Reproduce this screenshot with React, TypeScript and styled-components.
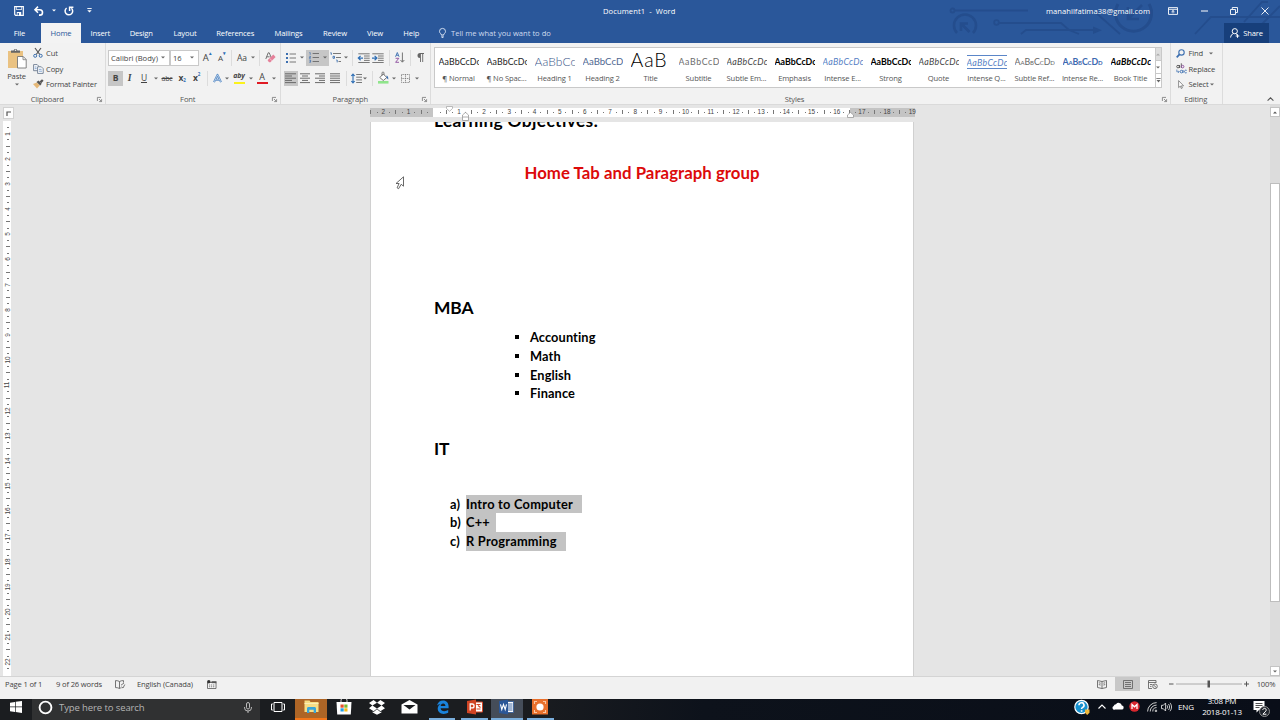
import React from "react";
import styled, { createGlobalStyle, css } from "styled-components";

const Global = createGlobalStyle`
  * { box-sizing: border-box; }
  body { margin: 0; overflow: hidden; background: #e5e5e5; }
  svg { display: block; flex: none; overflow: visible; }
`;

const BLUE = "#2a579a";
const UI = `"Open Sans", "Noto Sans", sans-serif`;

const Window = styled.div`
  width: 1280px;
  height: 720px;
  display: flex;
  flex-direction: column;
  overflow: hidden;
  font-family: ${UI};
  font-size: 7.6px;
  letter-spacing: -0.15px;
  color: #444;
  white-space: nowrap;
  cursor: default;
`;

/* ---------- header ---------- */
const Header = styled.header`
  position: relative;
  height: 43px;
  background: ${BLUE};
  color: #fff;
  flex: none;
`;
const Circuit = styled.svg`
  position: absolute;
  right: 0;
  top: 0;
`;
const TitleRow = styled.div`
  position: relative;
  height: 23px;
  display: flex;
  align-items: center;
  justify-content: space-between;
  padding: 0 11px 2px 14px;
`;
const QuickAccess = styled.div`
  width: 589px;
  display: flex;
  align-items: center;
`;
const Title = styled.div`
  width: 443px;
  letter-spacing: 0.08px;
`;
const Account = styled.div`
  flex: 1;
  letter-spacing: 0.03px;
`;
const WindowButtons = styled.div`
  width: 101px;
  display: flex;
  align-items: center;
  justify-content: space-between;
`;
const TabRow = styled.nav`
  position: relative;
  height: 20px;
  display: flex;
`;
const Tab = styled.div<{ $w: number; $active?: boolean }>`
  width: ${(p) => p.$w}px;
  display: flex;
  align-items: center;
  justify-content: center;
  &:first-child { padding-right: 2px; }
  ${(p) => p.$active && css`background: #f3f3f3; color: ${BLUE};`}
`;
const TellMe = styled.div`
  flex: 1;
  display: flex;
  align-items: center;
  gap: 5px;
  padding-left: 10px;
  color: #cfdcf0;
  letter-spacing: 0;
`;
const Share = styled.div`
  width: 45px;
  margin-right: 11px;
  display: flex;
  align-items: center;
  justify-content: center;
  gap: 3px;
  background: #173f7b;
`;

/* ---------- ribbon ---------- */
const Ribbon = styled.section`
  height: 62px;
  flex: none;
  display: flex;
  background: #f2f2f2;
  border-bottom: 1px solid #dadada;
`;
const Group = styled.div<{ $w: number }>`
  width: ${(p) => p.$w}px;
  display: flex;
  flex-direction: column;
  border-right: 1px solid #dcdcdc;
`;
const GroupBody = styled.div`
  height: 50px;
  display: flex;
`;
const GroupFooter = styled.div<{ $shift?: number }>`
  position: relative;
  height: 11px;
  display: flex;
  align-items: center;
  justify-content: center;
  padding-right: ${(p) => p.$shift ?? 10}px;
  color: #555;
`;
const Launcher = styled.svg`
  position: absolute;
  right: 3px;
  top: 4px;
`;
const PasteButton = styled.div`
  width: 33px;
  padding-top: 5px;
  display: flex;
  flex-direction: column;
  align-items: center;
  gap: 2px;
`;
const Commands = styled.div<{ $pad?: number }>`
  display: flex;
  flex-direction: column;
  padding: 2.4px 0 0 ${(p) => p.$pad ?? 0}px;
`;
const Command = styled.div`
  height: 15.5px;
  display: flex;
  align-items: center;
`;
const CommandIcon = styled.span`
  width: 13px;
  display: flex;
  justify-content: flex-start;
`;
const Rows = styled.div<{ $x: number }>`
  display: flex;
  flex-direction: column;
  gap: 5px;
  padding: 7px 0 0 ${(p) => p.$x}px;
`;
const Row = styled.div`
  height: 15.5px;
  display: flex;
  align-items: stretch;
`;
const Slot = styled.div<{ $w: number; $on?: boolean }>`
  width: ${(p) => p.$w}px;
  flex: none;
  display: flex;
  align-items: center;
  justify-content: center;
  background: ${(p) => (p.$on ? "#c6c6c6" : "transparent")};
`;
const Divider = styled.i<{ $w: number }>`
  width: ${(p) => p.$w}px;
  display: flex;
  justify-content: center;
  &::after { content: ""; width: 1px; background: #dcdcdc; }
`;
const Combo = styled.div<{ $w: number }>`
  width: ${(p) => p.$w}px;
  display: flex;
  align-items: center;
  justify-content: space-between;
  padding: 0 4px 0 2px;
  background: #fff;
  border: 1px solid #c9c9c9;
  letter-spacing: 0;
`;
const Glyph = styled.span<{ $size?: number; $bold?: boolean; $italic?: boolean; $deco?: string; $serif?: boolean }>`
  font-size: ${(p) => p.$size ?? 9}px;
  font-weight: ${(p) => (p.$bold ? 700 : 400)};
  font-style: ${(p) => (p.$italic ? "italic" : "normal")};
  text-decoration: ${(p) => p.$deco ?? "none"};
  font-family: ${(p) => (p.$serif ? `"Liberation Serif", serif` : UI)};
  line-height: 1;
`;
const Small = styled.span<{ $up?: boolean }>`
  font-size: 4.5px;
  font-weight: 700;
  color: #2f6fb5;
  align-self: ${(p) => (p.$up ? "flex-start" : "flex-end")};
  line-height: 7px;
  padding-bottom: 2px;
`;

/* ---------- styles gallery ---------- */
const GalleryWrap = styled.div`
  display: flex;
  height: 40.5px;
  margin: 4px 0 0 3px;
  border: 1px solid #c9c9c9;
  background: #fff;
`;
const StyleItem = styled.div`
  width: 48px;
  display: flex;
  flex-direction: column;
  align-items: center;
  overflow: hidden;
`;
const Sample = styled.div<{ $css?: string }>`
  width: 40px;
  height: 25px;
  padding-top: 4px;
  line-height: 20px;
  overflow: hidden;
  color: #222;
  font-family: Lato, sans-serif;
  font-size: 8.8px;
  letter-spacing: 0.1px;
  ${(p) => p.$css}
`;
const Band = styled.span`
  display: block;
  margin-top: 3px;
  height: 14px;
  line-height: 13px;
  border-top: 1px solid #5b86c8;
  border-bottom: 1px solid #5b86c8;
`;
const StyleName = styled.div`
  height: 12px;
  line-height: 11px;
  color: #555;
`;
const GalleryScroll = styled.div`
  flex: 1;
  display: flex;
  flex-direction: column;
  border-left: 1px solid #c9c9c9;
`;
const GalleryArrow = styled.div<{ $off?: boolean }>`
  flex: 1;
  display: flex;
  align-items: center;
  justify-content: center;
  background: ${(p) => (p.$off ? "#dedede" : "#fff")};
  & + & { border-top: 1px solid #c9c9c9; }
`;
const RibbonEnd = styled.div`
  flex: 1;
  display: flex;
  align-items: flex-end;
  justify-content: flex-end;
  padding: 0 6px 3px 0;
`;

/* ---------- workspace ---------- */
const Workspace = styled.main`
  flex: 1;
  min-height: 0;
  display: flex;
  background: #e5e5e5;
`;
const SideRuler = styled.div`
  width: 12px;
  padding: 2px 0 0 3px;
  display: flex;
  flex-direction: column;
  gap: 2px;
`;
const TabSelector = styled.div`
  height: 12px;
  width: 11px;
  display: flex;
  align-items: center;
  justify-content: center;
  background: #fdfdfd;
  border: 1px solid #d2d2d2;
`;
const VerticalTrack = styled.div`
  flex: 1;
  min-height: 0;
  width: 8px;
  overflow: hidden;
  background: #fff;
`;
const VerticalCell = styled.div`
  height: 25.2px;
  padding-left: 1px;
  display: grid;
  grid-template-rows: repeat(4, 1fr);
  justify-items: center;
  align-items: center;
  line-height: 0;
  font-size: 6.4px;
  font-family: "Liberation Sans", sans-serif;
  color: #444;
  letter-spacing: 0;
  &:first-child { margin-top: -3.2px; }
`;
const Turned = styled.span`
  transform: rotate(-90deg);
`;
const Center = styled.div`
  flex: 1;
  display: flex;
  flex-direction: column;
  align-items: center;
`;
const TopRuler = styled.div`
  position: relative;
  width: 545px;
  height: 9px;
  margin: 3px 0 5px 3px;
  flex: none;
  background: linear-gradient(90deg, #c4c4c4 63px, #fff 63px, #fff 480px, #c4c4c4 480px);
`;
const RulerCells = styled.div`
  display: flex;
  width: 546px;
`;
const RulerCell = styled.div`
  width: 25.2px;
  flex: none;
  display: grid;
  grid-template-columns: repeat(4, 6.3px);
  justify-items: center;
  align-items: center;
  font-size: 6.4px;
  line-height: 8px;
  font-family: "Liberation Sans", sans-serif;
  color: #444;
  letter-spacing: 0;
  &:first-child { margin-left: -2.4px; }
  &:last-child > :last-child { display: none; }
`;
const Tick = styled.i<{ $w: number; $h: number }>`
  width: ${(p) => p.$w}px;
  height: ${(p) => p.$h}px;
  background: #777;
`;
const Marker = styled.svg<{ $x: number; $y: number }>`
  position: absolute;
  left: ${(p) => p.$x}px;
  top: ${(p) => p.$y}px;
`;
const Page = styled.article`
  position: relative;
  width: 544px;
  flex: 1;
  min-height: 0;
  margin-left: 2px;
  padding-left: 63px;
  overflow: hidden;
  background: #fff;
  border: solid #d0d0d0;
  border-width: 0 1px;
  color: #000;
  font-family: Lato, sans-serif;
  font-weight: 700;
  font-variant-ligatures: none;
`;
const Heading = styled.h2<{ $mt: number; $track?: number }>`
  margin: ${(p) => p.$mt}px 0 0;
  height: 20px;
  line-height: 20px;
  font-size: 17.4px;
  letter-spacing: ${(p) => p.$track ?? -0.1}px;
`;
const RedHeading = styled(Heading)`
  margin-left: 90.5px;
  color: #dc0a0a;
  font-size: 16.8px;
`;
const List = styled.ul<{ $mt: number; $x: number; $marker: number; $track?: number }>`
  list-style: none;
  margin: ${(p) => p.$mt}px 0 0 ${(p) => p.$x}px;
  padding: 0;
  font-size: 12.8px;
  line-height: 18.8px;
  letter-spacing: ${(p) => p.$track ?? 0.1}px;
  li { display: flex; height: 18.75px; }
  li > :first-child { width: ${(p) => p.$marker}px; flex: none; }
`;
const Square = styled.i`
  &::before {
    content: "";
    display: block;
    width: 4px;
    height: 4px;
    margin-top: 7px;
    background: #000;
  }
`;
const Selected = styled.span<{ $w: number }>`
  width: ${(p) => p.$w}px;
  background: #c3c3c3;
`;
const Pointer = styled.svg`
  position: absolute;
  left: 24px;
  top: 54px;
`;
const ScrollBar = styled.div`
  width: 10px;
  padding-top: 2px;
  display: flex;
  flex-direction: column;
  background: #dcdcdc;
`;
const ScrollButton = styled.div`
  height: 10px;
  display: flex;
  align-items: center;
  justify-content: center;
  background: #fff;
  border: 1px solid #c4c4c4;
`;
const Thumb = styled.div`
  margin: 66px 0 auto;
  height: 419px;
  background: #fff;
  border: 1px solid #bdbdbd;
`;

/* ---------- status bar ---------- */
const Status = styled.footer`
  height: 23px;
  flex: none;
  display: flex;
  align-items: flex-start;
  background: #f1f1f1;
  border-top: 1px solid #d4d4d4;
  padding-left: 5px;
  line-height: 14px;
`;
const StatusItem = styled.div<{ $w: number; $on?: boolean; $center?: boolean }>`
  width: ${(p) => p.$w}px;
  height: 14px;
  display: flex;
  align-items: center;
  justify-content: ${(p) => (p.$center ? "center" : "flex-start")};
  background: ${(p) => (p.$on ? "#c8c8c8" : "transparent")};
`;
const Spacer = styled.div`
  flex: 1;
`;

/* ---------- taskbar ---------- */
const Taskbar = styled.div`
  height: 21px;
  flex: none;
  display: flex;
  overflow: hidden;
  background: linear-gradient(90deg, #1b1d20 40%, #0d121b 55%, #090e18);
  color: #fff;
`;
const Start = styled.div`
  width: 32px;
  display: flex;
  justify-content: center;
  padding-top: 2px;
`;
const Search = styled.div`
  width: 228px;
  display: flex;
  align-items: center;
  padding: 0 8px 4px 6px;
  background: #303132;
  color: #b4b4b4;
  font-size: 9.5px;
  letter-spacing: -0.1px;
`;
const SearchText = styled.span`
  flex: 1;
  padding-left: 6px;
`;
const TaskButton = styled.div<{ $w: number; $bg?: string; $line?: string }>`
  width: ${(p) => p.$w}px;
  display: flex;
  justify-content: center;
  background: ${(p) => p.$bg ?? "transparent"};
  border-bottom: 2px solid ${(p) => p.$line ?? "transparent"};
`;
const Tray = styled.div<{ $w: number; $pt?: number }>`
  width: ${(p) => p.$w}px;
  display: flex;
  justify-content: center;
  padding-top: ${(p) => p.$pt ?? 0}px;
  font-size: 8px;
  line-height: 16px;
`;
const Clock = styled.div`
  width: 46px;
  margin-top: -4px;
  display: flex;
  flex-direction: column;
  align-items: center;
  font-size: 8px;
  line-height: 11px;
  letter-spacing: -0.2px;
`;

/* ---------- icon helpers ---------- */
const Caret = ({ color = "#666" }: { color?: string }) => (
  <svg width="4" height="3" viewBox="0 0 4 3"><path d="M0 .4h4L2 2.6z" fill={color} /></svg>
);
const CaretUp = ({ color = "#555" }: { color?: string }) => (
  <svg width="4" height="3" viewBox="0 0 4 3"><path d="M0 2.6h4L2 .4z" fill={color} /></svg>
);
const LaunchIcon = () => (
  <Launcher width="5" height="5" viewBox="0 0 5 5" fill="none" stroke="#777" strokeWidth=".8">
    <path d="M.4 4V.4H4M2 2l2.4 2.4M4.6 2.2v2.4H2.2" />
  </Launcher>
);
const Lines = ({ rows, w = 11 }: { rows: [number, number][]; w?: number }) => (
  <svg width={w} height="10" viewBox={`0 0 ${w} 10`} stroke="#6a6a6a" strokeWidth="1">
    {rows.map(([a, b], i) => <path key={i} d={`M${a} ${i * 2.2 + 0.8}H${b}`} />)}
  </svg>
);

const SaveIcon = () => (
  <svg width="10" height="10" viewBox="0 0 10 10"><path d="M.7.7h8.6v8.6H1.6L.7 8.4z" fill="none" stroke="#fff" strokeWidth="1.2" /><path d="M2.2 1h5.6v3H2.2zM2.8 6h4.4v3.4H2.8z" fill="#fff" /><path d="M3.6 7h1.3v2.2H3.6zM2.8 1.2h4.4v2H2.8z" fill={BLUE} /></svg>
);
const UndoIcon = () => (
  <svg width="10" height="10" viewBox="0 0 10 10" fill="none" stroke="#fff" strokeWidth="1.6"><path d="M1.2 3.7h4.6a2.6 2.6 0 0 1 0 5.4H5M4 .6L1 3.7l3 3" /></svg>
);
const RedoIcon = () => (
  <svg width="10" height="10" viewBox="0 0 10 10" fill="none" stroke="#fff" strokeWidth="1.5"><path d="M2.6 2A3.8 3.8 0 1 0 7.4 2.2M5.6 5V1.3h3.8" /></svg>
);
const MoreIcon = () => (
  <svg width="5" height="5" viewBox="0 0 5 5"><path d="M.3.5h4.4" stroke="#fff" strokeWidth=".9" /><path d="M.3 2.3h4.4L2.5 4.6z" fill="#fff" /></svg>
);

const CircuitArt = () => (
  <Circuit width="330" height="43" viewBox="950 0 330 43" fill="none" stroke="#244d8d" strokeWidth="1.8">
    <circle cx="952.5" cy="10.5" r="2" /><path d="M955 10.5h73" />
    <path d="M957 33a11 11 0 1 1 16 0" strokeWidth="2.6" />
    <path d="M961 31V23.500h7M961.500 24l8 8" strokeWidth="2.6" />
    <circle cx="996.500" cy="22.500" r="2.300" /><path d="M999 23h62l8 7 10 4" />
    <path d="M1021 34l5-4h72" /><path d="M1093 26.500l9 3.800-9 3.800z" fill="#244d8d" stroke="none" />
    <path d="M1095 12l25 22" />
    <path d="M1118 4a18 18 0 1 0 31 0" strokeWidth="3" /><path d="M1128 7v12h11M1128 19l14-14" strokeWidth="2.600" />
    <path d="M1195 34l16-17h69" /><path d="M1244 22l18-20h6M1262 24l18-18" />
  </Circuit>
);

const PasteIcon = () => (
  <svg width="20" height="21" viewBox="0 0 20 21"><path d="M1 3h15v17H1z" fill="#eac282" /><path d="M4 4.800V2.500h2.600a2 2 0 0 1 3.800 0H13v2.300z" fill="#666" /><circle cx="8.500" cy="2.200" r=".8" fill="#f2f2f2" /><path d="M10.500 8.500h5.700l3 3V20h-8.700z" fill="#fff" stroke="#777" strokeWidth=".9" /><path d="M16 8.500v3.200h3.200" fill="none" stroke="#777" strokeWidth=".8" /></svg>
);
const CutIcon = () => (
  <svg width="10" height="10" viewBox="0 0 10 10" fill="none"><path d="M2 0l4.800 6.500M8 0L3.200 6.500" stroke="#555" strokeWidth="1.200" /><circle cx="2.200" cy="7.800" r="1.500" stroke="#3b6fae" strokeWidth="1" /><circle cx="7.700" cy="7.800" r="1.500" stroke="#3b6fae" strokeWidth="1" /></svg>
);
const CopyIcon = () => (
  <svg width="11" height="10" viewBox="0 0 11 10" fill="#fff" stroke="#6b7a90" strokeWidth=".9"><path d="M.6.6h3.600l1.500 1.500v4.600H.6z" /><path d="M4.600 2.800h3.700L10.200 4.700v4.700H4.600z" /><path d="M5.800 5.300h2.800M5.800 7.200h3.200M1.700 3h1.800M1.700 4.700h2" stroke="#4d7dbb" strokeWidth=".7" /></svg>
);
const PainterIcon = () => (
  <svg width="11" height="10" viewBox="0 0 11 10"><path d="M0 5l3.800-1.600 3 3L4 9.600z" fill="#e6b877" /><path d="M3.500 3l2-1.500 3.200 3.200L7.200 6.600z" fill="#555" /><path d="M6.500 2.600L9 .2l1.600 1.500-2.400 2.600z" fill="#555" /></svg>
);
const EraserIcon = () => (
  <svg width="11" height="11" viewBox="0 0 11 11"><path d="M.8 7L3.200.8h1L6.400 6M1.600 4.800h3" fill="none" stroke="#666" strokeWidth=".9" /><path d="M3 7.700L8.300 2.600l2.300 2.300-5.200 5.300H4.200L2.700 8.800z" fill="#e5819a" /><path d="M4.500 6.300l2.500 2.400" stroke="#f6c6d1" strokeWidth=".8" /></svg>
);
const BulletsIcon = () => (
  <svg width="10" height="10" viewBox="0 0 10 10"><g fill="#3c6fb0"><path d="M0 0h2v2H0zM0 4h2v2H0zM0 8h2v2H0z" /></g><path d="M3.600 1H10M3.600 5H10M3.600 9H10" stroke="#6a6a6a" strokeWidth=".9" /></svg>
);
const NumberingIcon = () => (
  <svg width="10" height="11" viewBox="0 0 10 11"><path d="M.4.6h.8v2.200M.3 4.300h1.200v1.100H.4v1h1.300M.3 8h1.300v2.300H.3M.6 9.100h1" fill="none" stroke="#3c6fb0" strokeWidth=".7" /><path d="M3.600 1.500H10M3.600 5.500H10M3.600 9.500H10" stroke="#6a6a6a" strokeWidth=".9" /></svg>
);
const MultiIcon = () => (
  <svg width="11" height="11" viewBox="0 0 11 11"><path d="M.4.800h.9v2M3 4.300h1.500v2H3zM6.300 8h.9v2.400" fill="none" stroke="#3c6fb0" strokeWidth=".9" /><path d="M3 1.500h8M6 5.500h5M8.500 9.500H11" stroke="#6a6a6a" strokeWidth=".9" /></svg>
);
const IndentIcon = ({ right }: { right?: boolean }) => (
  <svg width="12" height="10" viewBox="0 0 12 10"><path d="M.3.800h11.400M6 3h5.700M6 5.200h5.700M6 7.400h5.700M.3 9.500h11.400" stroke="#6a6a6a" strokeWidth=".9" /><path d={right ? "M0 5.100h4M2.600 2.900l2.300 2.200-2.300 2.200" : "M5 5.100H1M2.600 2.900L.3 5.100l2.300 2.200"} stroke="#2f6fb5" strokeWidth="1.200" fill="none" /></svg>
);
const SortIcon = () => (
  <svg width="10" height="11" viewBox="0 0 10 11" fill="none"><path d="M.5 4.800L2.300.5l1.800 4.300M1.200 3.300h2.200" stroke="#3c6fb0" strokeWidth=".9" /><path d="M.6 6.300h3.200L.6 10.300h3.400" stroke="#8a4b9c" strokeWidth=".9" /><path d="M7.400.5v9.300M5.500 8l1.900 2.200L9.300 8" stroke="#666" strokeWidth=".9" /></svg>
);
const PilcrowIcon = () => (
  <svg width="7" height="9" viewBox="0 0 7 9"><path d="M3 0h4v.9H3zM3 0v5a2.500 2.500 0 0 1 0-5z" fill="#666" /><path d="M3.500 0v9M5.700 0v9" stroke="#666" strokeWidth=".9" /></svg>
);
const SpacingIcon = () => (
  <svg width="11" height="11" viewBox="0 0 11 11" fill="none"><path d="M2 1v9M.3 3L2 1l1.700 2M.3 8L2 10l1.700-2" stroke="#2f6fb5" strokeWidth="1.100" /><path d="M5.200 1.500H11M5.200 4.200H11M5.200 6.900H11M5.200 9.500H11" stroke="#6a6a6a" strokeWidth=".9" /></svg>
);
const BucketIcon = () => (
  <svg width="11" height="12" viewBox="0 0 11 12"><path d="M0 9h10.500v2.600H0z" fill="#90e58c" /><path d="M1.800 5.500L5.200 2l3.600 3.500-3.500 3z" fill="#fff" stroke="#666" strokeWidth=".9" /><path d="M4 3.800V1a1 1 0 0 1 2 0v2" fill="none" stroke="#666" strokeWidth=".8" /><path d="M8.500 3.500c1.500.5 2 2 1.700 4L8.600 6z" fill="#3c6fb0" /></svg>
);
const BorderIcon = () => (
  <svg width="9" height="9" viewBox="0 0 9 9" fill="none" stroke="#777" strokeWidth=".9"><path d="M.5.5h8v8h-8zM4.500.5v8M.5 4.500h8" strokeDasharray="1 .8" /></svg>
);
const TextEffectIcon = () => (
  <svg width="9" height="9" viewBox="0 0 9 9" fill="none" strokeLinejoin="round"><path d="M1 8.200L4.500.8 8 8.200M2.400 5.800h4.200" stroke="#3c78bd" strokeWidth="1.900" /><path d="M1 8.200L4.500.8 8 8.200M2.400 5.800h4.200" stroke="#fff" strokeWidth=".6" /></svg>
);
const UnderBar = styled.span<{ $c: string }>`
  display: flex;
  justify-content: center;
  width: 11px;
  height: 12px;
  border-bottom: 2.5px solid ${(p) => p.$c};
`;

const FindIcon = () => (
  <svg width="9" height="9" viewBox="0 0 9 9" fill="none" stroke="#3c6fb0"><circle cx="5.500" cy="3.400" r="2.700" strokeWidth="1.100" /><path d="M3.500 5.400L.7 8.300" strokeWidth="1.700" /></svg>
);
const ReplaceIcon = () => (
  <svg width="11" height="11" viewBox="0 0 11 11" fill="none" strokeWidth=".9"><circle cx="2" cy="3.600" r="1.300" stroke="#555" /><path d="M3.500 2v3M5.300.3V5" stroke="#555" /><circle cx="6.600" cy="3.600" r="1.300" stroke="#8a4b9c" /><circle cx="5.500" cy="8.600" r="1.300" stroke="#3c6fb0" /><path d="M7 7v3M10.700 7.400a1.400 1.400 0 1 0 0 2.300" stroke="#3c6fb0" /><path d="M.8 6.500v2.300H3M2.200 7.700l1 1.100-1 1.100" stroke="#3c6fb0" strokeWidth=".7" /></svg>
);
const SelectIcon = () => (
  <svg width="6" height="9" viewBox="0 0 6 9"><path d="M.6.600v7l1.700-1.500 1 2.400 1.100-.5-1-2.200h2.200z" fill="#fff" stroke="#666" strokeWidth=".7" /></svg>
);

/* ---------- data ---------- */
const tabs: [string, number][] = [
  ["File", 41], ["Home", 40], ["Insert", 38.5], ["Design", 43.5], ["Layout", 44], ["References", 56.5],
  ["Mailings", 50], ["Review", 43], ["View", 37], ["Help", 35.5],
];
const gallery: [string, string, string?][] = [
  ["¶ Normal", "AaBbCcDc"],
  ["¶ No Spac...", "AaBbCcDc"],
  ["Heading 1", "AaBbCc", "font-size:12px;color:#3a5688;font-weight:300;letter-spacing:.1px;"],
  ["Heading 2", "AaBbCcD", "font-size:9.6px;color:#4f6791;letter-spacing:0;"],
  ["Title", "AaB", "font-size:19.5px;font-weight:300;color:#000;letter-spacing:.9px;padding-top:2px;"],
  ["Subtitle", "AaBbCcD", "color:#6c6c6c;letter-spacing:.6px;"],
  ["Subtle Em...", "AaBbCcDc", "font-style:italic;color:#444;letter-spacing:.3px;"],
  ["Emphasis", "AaBbCcDc", "font-weight:700;color:#000;letter-spacing:0;"],
  ["Intense E...", "AaBbCcDc", "font-style:italic;color:#5580c4;letter-spacing:.3px;"],
  ["Strong", "AaBbCcDc", "font-weight:700;color:#000;letter-spacing:0;"],
  ["Quote", "AaBbCcDc", "font-style:italic;color:#444;letter-spacing:.3px;"],
  ["Intense Q...", "AaBbCcDc", "font-style:italic;color:#5580c4;letter-spacing:.3px;"],
  ["Subtle Ref...", "AaBbCcDd", "font-variant:small-caps;color:#666;letter-spacing:-.05px;"],
  ["Intense Re...", "AaBbCcDd", "font-variant:small-caps;color:#3c68b0;font-weight:700;letter-spacing:-.15px;"],
  ["Book Title", "AaBbCcDc", "font-weight:700;font-style:italic;color:#000;letter-spacing:.15px;"],
];
const topNumbers = ["2", "1", "", ...Array.from({ length: 19 }, (_, i) => String(i + 1))];
const sideNumbers = Array.from({ length: 22 }, (_, i) => String(i + 1));

export default function App() {
  return (
    <Window>
      <Global />
      <Header>
        <CircuitArt />
        <TitleRow>
          <QuickAccess>
            <Slot $w={10}><SaveIcon /></Slot>
            <Slot $w={30}><UndoIcon /></Slot>
            <Slot $w={0}><Caret color="#fff" /></Slot>
            <Slot $w={15} /><Slot $w={0}><RedoIcon /></Slot>
            <Slot $w={20} /><Slot $w={0}><MoreIcon /></Slot>
          </QuickAccess>
          <Title>Document1&nbsp; -&nbsp; Word</Title>
          <Account>manahilfatima38@gmail.com</Account>
          <WindowButtons>
            <svg width="10" height="8" viewBox="0 0 10 8" fill="none" stroke="#fff"><path d="M.5.600h9v6.800h-9zM.5 2.300h9M5 6.400V3.500M3.500 4.900L5 3.500l1.500 1.400" strokeWidth=".9" /></svg>
            <svg width="7" height="8" viewBox="0 0 7 8" stroke="#fff"><path d="M0 4h7" strokeWidth="1" /></svg>
            <svg width="8" height="8" viewBox="0 0 8 8" fill="none" stroke="#fff" strokeWidth=".9"><path d="M.5 2.500h5v5h-5zM2.300 2.300V.5h5.200v5H5.800" /></svg>
            <svg width="8" height="8" viewBox="0 0 8 8" stroke="#fff" strokeWidth=".9"><path d="M.5.500l7 7M7.500.500l-7 7" /></svg>
          </WindowButtons>
        </TitleRow>
        <TabRow>
          {tabs.map(([t, w]) => <Tab key={t} $w={w} $active={t === "Home"}>{t}</Tab>)}
          <TellMe>
            <svg width="7" height="10" viewBox="0 0 7 10" fill="none" stroke="#dfe8f6" strokeWidth=".9"><path d="M2.200 7V6C1 5.200.5 4.400.5 3.400a3 3 0 0 1 6 0c0 1-.5 1.800-1.700 2.600v1zM2.200 8.200h2.600M2.600 9.500h1.800" /></svg>
            Tell me what you want to do
          </TellMe>
          <Share>
            <svg width="10" height="10" viewBox="0 0 10 10" fill="none" stroke="#fff" strokeWidth="1"><circle cx="4.800" cy="3.200" r="2.600" /><path d="M.6 9.500c.2-2 1.300-3.400 2.800-3.900M6 5.800l1 .8M7.500 6.200v3.600M5.700 8h3.600" /></svg>
            Share
          </Share>
        </TabRow>
      </Header>

      <Ribbon>
        <Group $w={105.5}>
          <GroupBody>
            <PasteButton><PasteIcon />Paste<Caret /></PasteButton>
            <Commands>
              <Command><CommandIcon><CutIcon /></CommandIcon>Cut</Command>
              <Command><CommandIcon><CopyIcon /></CommandIcon>Copy</Command>
              <Command><CommandIcon><PainterIcon /></CommandIcon>Format Painter</Command>
            </Commands>
          </GroupBody>
          <GroupFooter>Clipboard<LaunchIcon /></GroupFooter>
        </Group>

        <Group $w={175.5}>
          <GroupBody>
            <Rows $x={2.5}>
              <Row>
                <Combo $w={62}>Calibri (Body)<Caret /></Combo>
                <Combo $w={29}>16<Caret /></Combo>
                <Slot $w={16}><Glyph $size={9.5}>A</Glyph><Small $up>▴</Small></Slot>
                <Slot $w={14}><Glyph $size={8}>A</Glyph><Small $up>▾</Small></Slot>
                <Divider $w={5} />
                <Slot $w={16}><Glyph $size={8.5}>Aa</Glyph></Slot>
                <Slot $w={5}><Caret /></Slot>
                <Divider $w={9} />
                <Slot $w={13}><EraserIcon /></Slot>
              </Row>
              <Row>
                <Slot $w={15} $on><Glyph $size={8.5} $bold>B</Glyph></Slot>
                <Slot $w={13}><Glyph $size={9.5} $bold $italic $serif>I</Glyph></Slot>
                <Slot $w={16}><Glyph $size={8.5} $deco="underline">U</Glyph></Slot>
                <Slot $w={7}><Caret /></Slot>
                <Slot $w={16}><Glyph $size={7} $deco="line-through">abc</Glyph></Slot>
                <Slot $w={14}><Glyph $size={8.5} $bold>x</Glyph><Small>2</Small></Slot>
                <Slot $w={15}><Glyph $size={8.5} $bold>x</Glyph><Small $up>2</Small></Slot>
                <Divider $w={6} />
                <Slot $w={14}><TextEffectIcon /></Slot>
                <Slot $w={6}><Caret /></Slot>
                <Slot $w={18}><UnderBar $c="#fbf21c"><Glyph $size={7} $bold $italic>aby</Glyph></UnderBar></Slot>
                <Slot $w={5}><Caret /></Slot>
                <Slot $w={18}><UnderBar $c="#e01b24"><Glyph $size={9}>A</Glyph></UnderBar></Slot>
                <Slot $w={5}><Caret /></Slot>
              </Row>
            </Rows>
          </GroupBody>
          <GroupFooter>Font<LaunchIcon /></GroupFooter>
        </Group>

        <Group $w={149.5}>
          <GroupBody>
            <Rows $x={2.5}>
              <Row>
                <Slot $w={14}><BulletsIcon /></Slot>
                <Slot $w={8}><Caret /></Slot>
                <Slot $w={16} $on><NumberingIcon /></Slot>
                <Slot $w={7} $on><Caret /></Slot>
                <Slot $w={14}><MultiIcon /></Slot>
                <Slot $w={6}><Caret /></Slot>
                <Divider $w={8} />
                <Slot $w={14}><IndentIcon /></Slot>
                <Slot $w={15}><IndentIcon right /></Slot>
                <Divider $w={8} />
                <Slot $w={12}><SortIcon /></Slot>
                <Divider $w={10} />
                <Slot $w={9}><PilcrowIcon /></Slot>
              </Row>
              <Row>
                <Slot $w={14.5} $on><Lines rows={[[0, 11], [0, 7], [0, 11], [0, 7], [0, 11]]} /></Slot>
                <Slot $w={14}><Lines rows={[[0, 10], [2, 8], [0, 10], [2, 8], [0, 10]]} w={10} /></Slot>
                <Slot $w={16}><Lines rows={[[0, 10], [4, 10], [0, 10], [4, 10], [0, 10]]} w={10} /></Slot>
                <Slot $w={14}><Lines rows={[[0, 10], [0, 10], [0, 10], [0, 10], [0, 10]]} w={10} /></Slot>
                <Divider $w={8} />
                <Slot $w={12}><SpacingIcon /></Slot>
                <Slot $w={6}><Caret /></Slot>
                <Divider $w={9} />
                <Slot $w={13}><BucketIcon /></Slot>
                <Slot $w={8}><Caret /></Slot>
                <Slot $w={14}><BorderIcon /></Slot>
                <Slot $w={9}><Caret /></Slot>
              </Row>
            </Rows>
          </GroupBody>
          <GroupFooter>Paragraph<LaunchIcon /></GroupFooter>
        </Group>

        <Group $w={740}>
          <GroupBody>
            <GalleryWrap>
              {gallery.map(([name, sample, style]) => (
                <StyleItem key={name}>
                  <Sample $css={style}>{name === "Intense Q..." ? <Band>{sample}</Band> : sample}</Sample>
                  <StyleName>{name}</StyleName>
                </StyleItem>
              ))}
              <GalleryScroll>
                <GalleryArrow $off><CaretUp color="#aaa" /></GalleryArrow>
                <GalleryArrow><Caret /></GalleryArrow>
                <GalleryArrow>
                  <svg width="5" height="5" viewBox="0 0 5 5"><path d="M.3.500h4.400" stroke="#666" strokeWidth=".8" /><path d="M.5 2h4L2.500 4.400z" fill="#666" /></svg>
                </GalleryArrow>
              </GalleryScroll>
            </GalleryWrap>
          </GroupBody>
          <GroupFooter $shift={11}>Styles<LaunchIcon /></GroupFooter>
        </Group>

        <Group $w={52.5}>
          <GroupBody>
            <Commands $pad={5}>
              <Command><CommandIcon><FindIcon /></CommandIcon><span>Find</span><Slot $w={16}><Caret /></Slot></Command>
              <Command><CommandIcon><ReplaceIcon /></CommandIcon>Replace</Command>
              <Command><CommandIcon><Slot $w={10}><SelectIcon /></Slot></CommandIcon><span>Select</span><Slot $w={7}><Caret /></Slot></Command>
            </Commands>
          </GroupBody>
          <GroupFooter $shift={1}>Editing</GroupFooter>
        </Group>
        <RibbonEnd>
          <svg width="7" height="4" viewBox="0 0 7 4" fill="none" stroke="#555" strokeWidth="1.100"><path d="M.6 3.600L3.500.8l2.900 2.800" /></svg>
        </RibbonEnd>
      </Ribbon>

      <Workspace>
        <SideRuler>
          <TabSelector>
            <svg width="5" height="5" viewBox="0 0 5 5"><path d="M1 0v4h4" fill="none" stroke="#555" strokeWidth="1.200" transform="matrix(1 0 0 -1 0 5)" /></svg>
          </TabSelector>
          <VerticalTrack>
            {sideNumbers.map((n) => (
              <VerticalCell key={n}>
                <Tick $w={4} $h={1} /><Tick $w={2} $h={1} /><Turned>{n}</Turned><Tick $w={2} $h={1} />
              </VerticalCell>
            ))}
          </VerticalTrack>
        </SideRuler>
        <Center>
          <TopRuler>
            <RulerCells>
              {topNumbers.map((n, i) => (
                <RulerCell key={i}>
                  <Tick $w={1} $h={4} /><Tick $w={1} $h={1} /><span>{n}</span><Tick $w={1} $h={1} />
                </RulerCell>
              ))}
            </RulerCells>
            <Marker $x={76} $y={-2} width="7" height="6" viewBox="0 0 7 6"><path d="M.5.500h6v2l-3 2.800-3-2.800z" fill="#fff" stroke="#aaa" strokeWidth=".8" /></Marker>
            <Marker $x={92} $y={4} width="7" height="9" viewBox="0 0 7 9"><path d="M.5 8.500V3l3-2.600L6.500 3v5.500zM.5 5h6" fill="#fff" stroke="#999" strokeWidth=".8" /></Marker>
            <Marker $x={477} $y={4} width="7" height="6" viewBox="0 0 7 6"><path d="M.5 5.500V3l3-2.600L6.500 3v2.500z" fill="#fff" stroke="#999" strokeWidth=".8" /></Marker>
          </TopRuler>
          <Page>
            <Heading $mt={-11} $track={0.33}>Learning Objectives:</Heading>
            <RedHeading $mt={32} $track={0.03}>Home Tab and Paragraph group</RedHeading>
            <Heading $mt={115}>MBA</Heading>
            <List $mt={10} $x={81} $marker={15}>
              {["Accounting", "Math", "English", "Finance"].map((t) => <li key={t}><Square /><span>{t}</span></li>)}
            </List>
            <Heading $mt={35.5}>IT</Heading>
            <List $mt={36} $x={16} $marker={16} $track={0.24}>
              <li><span>a)</span><Selected $w={116}>Intro to Computer</Selected></li>
              <li><span>b)</span><Selected $w={30}>C++</Selected></li>
              <li><span>c)</span><Selected $w={100}>R Programming</Selected></li>
            </List>
            <Pointer width="10" height="14" viewBox="0 0 10 14"><path d="M8.500.800v9.400L6.200 8.300l-2.600 4.400-1.500-.9 2-4.300H1z" fill="#fff" stroke="#444" strokeWidth=".8" /></Pointer>
          </Page>
        </Center>
        <ScrollBar>
          <ScrollButton><CaretUp /></ScrollButton>
          <Thumb />
          <ScrollButton><Caret /></ScrollButton>
        </ScrollBar>
      </Workspace>

      <Status>
        <StatusItem $w={51}>Page 1 of 1</StatusItem>
        <StatusItem $w={59}>9 of 26 words</StatusItem>
        <StatusItem $w={22}>
          <svg width="10" height="9" viewBox="0 0 10 9" fill="none" stroke="#666" strokeWidth=".9"><path d="M4.500 1.500C3.500.8 2 .6.5.600v7c1.500 0 3 .2 4 .9zM4.500 1.500C5.500.8 7 .6 8.500.600v2M4.500 8.500c.5-.4 1-.6 2-.7M6 5.200l3-2.200M6.500 6.800L8 8l1.800-3.500" /></svg>
        </StatusItem>
        <StatusItem $w={70}>English (Canada)</StatusItem>
        <StatusItem $w={12}>
          <svg width="10" height="9" viewBox="0 0 10 9"><path d="M.5 2.500h8.500v6H.5z" fill="#fff" stroke="#555" strokeWidth=".8" /><path d="M4.500 1.200h5v2h-5z" fill="#555" /><circle cx="1.800" cy="1.800" r="1.700" fill="#333" /><path d="M1.800 5h6M1.800 6.800h6" stroke="#666" strokeWidth=".9" strokeDasharray="1.400 .7" /></svg>
        </StatusItem>
        <Spacer />
        <StatusItem $w={27} $center>
          <svg width="10" height="9" viewBox="0 0 10 9" fill="none" stroke="#666" strokeWidth=".9"><path d="M5 1.500L.5.500v7L5 8.500l4.500-1v-7zM5 1.500v7M1.800 2.800l1.800.4M1.800 4.600l1.800.4M8.200 2.800l-1.800.4M8.200 4.600L6.400 5" /></svg>
        </StatusItem>
        <StatusItem $w={25} $on $center>
          <svg width="10" height="9" viewBox="0 0 10 9" fill="none" stroke="#666" strokeWidth=".9"><path d="M.5.500h9v8h-9zM2 2.500h6M2 4.500h6M2 6.500h6" /></svg>
        </StatusItem>
        <StatusItem $w={25} $center>
          <svg width="10" height="9" viewBox="0 0 10 9" fill="none" stroke="#666" strokeWidth=".9"><path d="M4 8.500H.5v-8h7.500V3M.5 2.500H8M2 4.500h2.500M2 6.400h1.500" /><circle cx="7" cy="6.300" r="2.300" /><path d="M5.500 5l3 2.700" /></svg>
        </StatusItem>
        <StatusItem $w={87} $center>
          <svg width="80" height="8" viewBox="0 0 80 8"><path d="M0 4h4.500M75 4h5M77.500 1.500v5" stroke="#555" strokeWidth="1" /><path d="M7 4h66" stroke="#aaa" strokeWidth="1" /><path d="M38.500 .5h2.500v7h-2.500z" fill="#555" /></svg>
        </StatusItem>
        <StatusItem $w={28} $center>100%</StatusItem>
      </Status>

      <Taskbar>
        <Start>
          <svg width="12" height="12" viewBox="0 0 12 12" fill="#fff"><path d="M0 1.700l5-.8v4.700H0zM5.700.8L12 0v5.600H5.700zM0 6.300h5V11l-5-.7zM5.700 6.300H12V12l-6.300-.9z" /></svg>
        </Start>
        <Search>
          <svg width="15" height="15" viewBox="0 0 15 15"><circle cx="7.500" cy="7.500" r="5.900" fill="none" stroke="#fff" strokeWidth="1.900" /></svg>
          <SearchText>Type here to search</SearchText>
          <svg width="8" height="11" viewBox="0 0 8 11" fill="none" stroke="#bbb" strokeWidth="1"><rect x="2.500" y=".5" width="3" height="6.500" rx="1.500" /><path d="M.6 5v1.200a3.400 2.800 0 0 0 6.800 0V5M4 9v2" /></svg>
        </Search>
        <TaskButton $w={35}>
          <svg width="14" height="16" viewBox="0 0 14 16" fill="none" stroke="#fff" strokeWidth="1"><path d="M3 3.500h8v9H3zM1.800 5H.5v6h1.300M12.200 5h1.300v6h-1.300" /></svg>
        </TaskButton>
        <TaskButton $w={32} $bg="#ad6526" $line="#f2761a">
          <svg width="15" height="15" viewBox="0 0 15 15"><path d="M.5 1.500h5l1 1.500h8V13H.5z" fill="#f6dd85" /><path d="M.5 4.500h14" stroke="#fbeeb5" /><path d="M3 14V9.500C3 8.600 3.600 8 4.500 8h6c.9 0 1.500.6 1.500 1.500V14H9.700v-3.200H5.300V14z" fill="#39a5d8" /></svg>
        </TaskButton>
        <TaskButton $w={33}>
          <svg width="16" height="16" viewBox="0 0 16 16"><path d="M5 3V1.200a3 3 0 0 1 6 0V3" fill="none" stroke="#ddd" /><path d="M.5 3h15L14.800 15.500H1.200z" fill="#fff" /><path d="M4.500 5.500h3.200v3.200H4.500z" fill="#e8502c" /><path d="M8.300 5.500h3.200v3.200H8.300z" fill="#7cb82f" /><path d="M4.500 9.300h3.200v3.200H4.500z" fill="#22a0e6" /><path d="M8.300 9.300h3.200v3.200H8.300z" fill="#f7b918" /></svg>
        </TaskButton>
        <TaskButton $w={33}>
          <svg width="16" height="16" viewBox="0 0 16 16" fill="#fff"><path d="M4.600 1L8 3.700 3.400 6.600 0 3.900zM11.400 1L8 3.700l4.600 2.900L16 3.900zM0 9.300l3.400-2.700L8 9.400l-3.400 2.800zM16 9.300l-3.400-2.700L8 9.400l3.400 2.800zM8 10.200l3.400 2.800 1-.6v1.100L8 15.800l-4.400-2.300v-1.100l1 .6z" /></svg>
        </TaskButton>
        <TaskButton $w={33}>
          <svg width="17" height="16" viewBox="0 0 17 16"><path d="M.5 5.500L8.500 1l8 4.500v9H.5z" fill="#fff" /><path d="M2.500 6h12L8.500 10.500z" fill="#1b1d20" /></svg>
        </TaskButton>
        <TaskButton $w={3} />
        <TaskButton $w={26} $line="#7aaedc">
          <svg width="13" height="16" viewBox="0 0 13 16"><path d="M1 6.500C1.800 3.400 4 1.500 7 1.500c3.600 0 5.600 2.600 5.600 6v1.700H4.600c.2 2 1.700 3 3.700 3 1.500 0 2.800-.4 3.900-1.100v2.700c-1.200.7-2.700 1.100-4.500 1.100-3.800 0-6-2.200-6-5.300 0-2.200 1.200-3.800 3-4.700C3 5.200 1.800 5.700 1 6.500zm3.700.6h4.700c0-1.500-.8-2.500-2.300-2.500-1.300 0-2.200.9-2.400 2.500z" fill="#1a83dc" /></svg>
        </TaskButton>
        <TaskButton $w={6} />
        <TaskButton $w={27} $line="#7aaedc">
          <svg width="16" height="16" viewBox="0 0 16 16"><path d="M7 3h8.500v10H7z" fill="#fff" stroke="#d14424" strokeWidth="1" /><path d="M9.500 5.500h4M9.500 10h4M11 6.500l2.500 2" stroke="#d14424" strokeWidth="1.100" /><path d="M0 2l9-1.500v15L0 14z" fill="#d14424" /><path d="M3.200 11.500V5h1.900a1.900 1.900 0 0 1 0 3.900H3.200" fill="none" stroke="#fff" strokeWidth="1.300" /></svg>
        </TaskButton>
        <TaskButton $w={2.5} />
        <TaskButton $w={32} $bg="#454d59" $line="#7aaedc">
          <svg width="15" height="16" viewBox="0 0 15 16"><path d="M7 2.500h7.500v11H7z" fill="#fff" stroke="#2b5797" strokeWidth=".8" /><path d="M9 5h4.500M9 7h4.500M9 9h4.500M9 11h4.500" stroke="#2b5797" strokeWidth=".9" /><path d="M0 2l9-1.500v15L0 14z" fill="#2b5797" /><path d="M1.500 5.300l1.300 5.200L4.500 5.500l1.700 5 1.300-5.200" fill="none" stroke="#fff" strokeWidth="1.100" /></svg>
        </TaskButton>
        <TaskButton $w={4} />
        <TaskButton $w={27} $line="#7aaedc">
          <svg width="16" height="16" viewBox="0 0 16 16"><path d="M0 0h16v15.500H0z" fill="#e8702c" /><circle cx="8" cy="8" r="3.600" fill="#fff" /><path d="M2.500 5V2.500H5M11 2.500h2.500V5M13.500 11v2.500H11M5 13.500H2.500V11" fill="none" stroke="#f9c7a4" strokeWidth="1.100" /></svg>
        </TaskButton>
        <Spacer />
        <Tray $w={22}>
          <svg width="16" height="16" viewBox="0 0 16 16"><circle cx="7.500" cy="8" r="6.700" fill="#1591cf" stroke="#fff" strokeWidth="1.200" /><path d="M5 6.200a2.500 2.500 0 1 1 3.600 2.200c-.8.400-1 .8-1 1.600M7.600 11.300v1.500" fill="none" stroke="#fff" strokeWidth="1.600" /><path d="M11 10.500h4.500v3.200L13.200 16 11 13.700z" fill="#f0b93c" /></svg>
        </Tray>
        <Tray $w={18} $pt={5}><svg width="8" height="5" viewBox="0 0 8 5" fill="none" stroke="#fff" strokeWidth="1.100"><path d="M.5 4.500L4 1l3.500 3.500" /></svg></Tray>
        <Tray $w={14} $pt={4}><svg width="12" height="7" viewBox="0 0 12 7" fill="#fff"><path d="M3 6.500h6.500a2 2 0 0 0 .3-4A3.200 3.200 0 0 0 4 1.300 2.300 2.300 0 0 0 1.700 3 1.800 1.800 0 0 0 3 6.500z" /></svg></Tray>
        <Tray $w={19} $pt={2}><svg width="11" height="11" viewBox="0 0 11 11"><circle cx="5.500" cy="5.500" r="5.200" fill="#d9272e" /><path d="M3 8V3.500l2.500 2.300L8 3.500V8" fill="none" stroke="#fff" strokeWidth="1.300" /></svg></Tray>
        <Tray $w={15} $pt={3}><svg width="10" height="10" viewBox="0 0 10 10" fill="none" stroke="#ccc" strokeWidth="1"><path d="M.6 9.500A9 9 0 0 1 9.600.600M3.200 9.500a6.300 6.300 0 0 1 6.400-6.400M5.800 9.500a3.800 3.800 0 0 1 3.800-3.900M8.300 9.500V8.200h1.300v1.300z" /></svg></Tray>
        <Tray $w={14} $pt={3}><svg width="11" height="10" viewBox="0 0 11 10" fill="none" stroke="#ddd" strokeWidth=".9"><path d="M.5 3.300h1.800L4.600 1v8L2.300 6.700H.5zM6 3.300c.7 1 .7 2.400 0 3.400M7.500 2c1.400 1.800 1.400 4.200 0 6M9 .800c2 2.600 2 5.800 0 8.400" /></svg></Tray>
        <Tray $w={26}>ENG</Tray>
        <Clock><span>3:08 PM</span><span>2018-01-13</span></Clock>
        <Tray $w={33} $pt={2}>
          <svg width="17" height="17" viewBox="0 0 17 17"><path d="M.5 0h11v9H6l-2.500 2.500V9h-3z" fill="#fff" /><path d="M2.500 2.500h7M2.500 4.500h7M2.500 6.500h4" stroke="#222" strokeWidth=".8" /><circle cx="11.500" cy="10.500" r="5" fill="#1f242c" stroke="#9a9a9a" strokeWidth=".9" /><path d="M9.800 9a1.700 1.700 0 1 1 3 1.100L9.900 13.200h3.500" fill="none" stroke="#fff" strokeWidth="1" /></svg>
        </Tray>
        <TaskButton $w={2} />
      </Taskbar>
    </Window>
  );
}
